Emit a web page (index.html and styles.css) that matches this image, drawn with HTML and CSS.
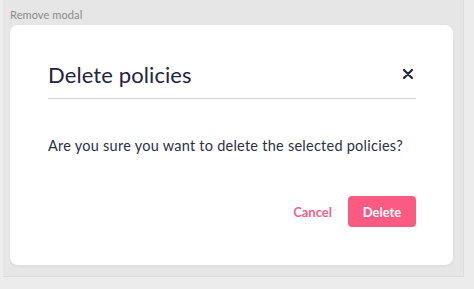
FILE: index.html
```html
<!DOCTYPE html>
<html>
<head>
<meta charset="utf-8">
<link rel="stylesheet" href="styles.css">
</head>
<body>
<div class="frame">
  <div class="label">Remove modal</div>
  <div class="modal">
    <div class="header">
      <h1 class="title">Delete policies</h1>
      <button class="close" aria-label="Close">
        <svg width="10" height="10" viewBox="0 0 10 10"><path d="M1 1L9 9M9 1L1 9" stroke="#1f2440" stroke-width="2.2" stroke-linecap="round"/></svg>
      </button>
    </div>
    <p class="message">Are you sure you want to delete the selected policies?</p>
    <div class="actions">
      <button class="btn-cancel">Cancel</button>
      <button class="btn-delete">Delete</button>
    </div>
  </div>
</div>
</body>
</html>
```
FILE: styles.css
```css
html, body {
  margin: 0;
  padding: 0;
  background: #ececec;
  width: 474px;
  height: 289px;
  overflow: hidden;
  font-family: Lato, "Noto Sans", sans-serif;
}
.frame {
  margin-left: 3px;
  width: 461px;
  height: 277px;
  background: #e6e6e6;
  border-right: 1px solid #dcdcdc;
  border-bottom: 1px solid #dcdcdc;
  padding: 8px 0 0 7px;
  box-sizing: border-box;
}
.label {
  font-size: 11px;
  color: #8a8a8a;
  line-height: 14px;
  height: 17px;
  letter-spacing: 0.1px;
}
.modal {
  width: 443px;
  height: 240px;
  background: #fff;
  border-radius: 8px;
  box-shadow: 0 1px 3px rgba(0,0,0,0.06);
  padding: 0 37px 0 38px;
  box-sizing: border-box;
  display: flex;
  flex-direction: column;
}
.header {
  display: flex;
  align-items: center;
  justify-content: space-between;
  border-bottom: 1.5px solid #d2d2d6;
  height: 74px;
  box-sizing: border-box;
  padding-top: 25px;
}
.title {
  margin: 0;
  font-size: 22px;
  font-weight: 400;
  color: #1f2440;
  letter-spacing: 0.1px;
}
.close {
  border: 0;
  background: none;
  padding: 0;
  margin-right: 3px;
  width: 10px;
  height: 10px;
  display: flex;
}
.message {
  margin: 37px 0 0;
  font-size: 14.5px;
  letter-spacing: 0.25px;
  color: #2b2f47;
  line-height: 20px;
}
.actions {
  margin-top: 40px;
  display: flex;
  justify-content: flex-end;
  align-items: center;
  gap: 16px;
}
.btn-cancel {
  border: 0;
  background: none;
  font-family: inherit;
  font-weight: 700;
  font-size: 13px;
  color: #f0618a;
  padding: 0;
}
.btn-delete {
  border: 0;
  background: #fb5a82;
  color: #fff;
  font-family: inherit;
  font-weight: 700;
  font-size: 13px;
  width: 68px;
  height: 31px;
  border-radius: 4px;
}
```
